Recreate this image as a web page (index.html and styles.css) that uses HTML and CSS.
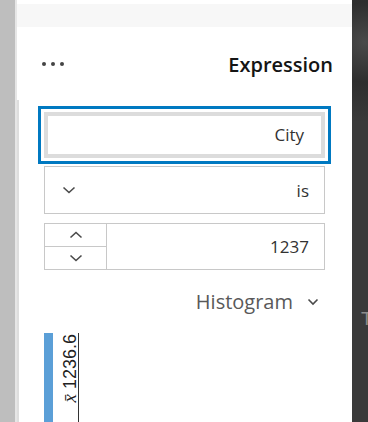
FILE: index.html
```html
<!DOCTYPE html>
<html>
<head>
<meta charset="utf-8">
<link rel="stylesheet" href="styles.css">
</head>
<body>
<div class="page">
  <div class="strip"></div>
  <div class="edge"></div>
  <div class="panel">
    <div class="topband"></div>
    <div class="header">
      <div class="dots"><span></span><span></span><span></span></div>
      <div class="title">Expression</div>
    </div>
    <div class="content">
      <div class="focus"><div class="field">City</div></div>
      <div class="select">
        <svg class="chev" width="14" height="8" viewBox="0 0 14 8"><polyline points="1.5,1.5 7,6.5 12.5,1.5" /></svg>
        <span class="val">is</span>
      </div>
      <div class="number">
        <div class="spin">
          <div class="half"><svg class="chev" width="14" height="8" viewBox="0 0 14 8"><polyline points="1.5,6.5 7,1.5 12.5,6.5" /></svg></div>
          <div class="half lower"><svg class="chev" width="14" height="8" viewBox="0 0 14 8"><polyline points="1.5,1.5 7,6.5 12.5,1.5" /></svg></div>
        </div>
        <div class="num">1237</div>
      </div>
      <div class="toggle">
        <span>Histogram</span>
        <svg class="chev" width="12" height="8" viewBox="0 0 12 8"><polyline points="1.5,1.5 6,6 10.5,1.5" /></svg>
      </div>
      <div class="chart">
        <div class="bar"></div>
        <div class="label"><span class="xbar">x̄</span> 1236.6</div>
        <div class="line"></div>
      </div>
    </div>
  </div>
  <div class="dark"><span class="maplabel">T</span></div>
</div>
</body>
</html>
```

FILE: styles.css
```css
html, body {
  margin: 0;
  padding: 0;
}
body {
  width: 368px;
  height: 422px;
  overflow: hidden;
  font-family: "Open Sans", "Liberation Sans", sans-serif;
  color: #323232;
}
.page {
  display: flex;
  width: 368px;
  height: 422px;
}
.strip {
  width: 15px;
  background: #bebebe;
}
.edge {
  width: 2px;
  background: #e6e6e6;
}
.panel {
  width: 335px;
  background: #ffffff;
  display: flex;
  flex-direction: column;
}
.topband {
  margin-top: 4px;
  height: 23px;
  background: #f7f7f7;
}
.header {
  height: 73px;
  display: flex;
  align-items: center;
  justify-content: space-between;
  padding: 0 19px 0 25px;
}
.dots {
  display: flex;
  gap: 5px;
}
.dots span {
  width: 4px;
  height: 4px;
  border-radius: 50%;
  background: #444444;
}
.title {
  font-size: 20px;
  line-height: 27px;
  font-weight: 600;
  color: #151515;
  margin-top: 2px;
}
.content {
  flex: 1;
  border-left: 2px solid #dedede;
  padding: 6px 21px 0 19px;
  display: flex;
  flex-direction: column;
}
.focus {
  border: 3px solid #0079c1;
  padding: 3px;
}
.field {
  border: 4px solid #dcdcdc;
  height: 38px;
  line-height: 38px;
  font-size: 17px;
  text-align: right;
  padding-right: 17px;
}
.chev {
  display: block;
  fill: none;
  stroke: #4a4a4a;
  stroke-width: 1.6;
}
.select {
  margin: 2px 6px 0;
  height: 46px;
  border: 1px solid #c8c8c8;
  display: flex;
  align-items: center;
  justify-content: space-between;
  padding: 0 15px 0 17px;
  font-size: 17px;
}
.number {
  margin: 9px 6px 0;
  height: 45px;
  border: 1px solid #c8c8c8;
  display: flex;
}
.spin {
  width: 61px;
  border-right: 1px solid #c8c8c8;
  display: flex;
  flex-direction: column;
}
.half {
  flex: 1;
  display: flex;
  align-items: center;
  justify-content: center;
}
.half.lower {
  border-top: 1px solid #c8c8c8;
}
.num {
  flex: 1;
  text-align: right;
  font-size: 17px;
  line-height: 45px;
  padding-right: 15px;
}
.toggle {
  margin: 18px 6px 0;
  display: flex;
  justify-content: flex-end;
  align-items: center;
  gap: 14px;
  padding-right: 6px;
  font-size: 20px;
  line-height: 27px;
  color: #595959;
}
.chart {
  margin: 18px 6px 0;
  flex: 1;
  display: flex;
}
.bar {
  width: 9px;
  background: #5b9fd7;
}
.label {
  margin-left: 10px;
  margin-top: 1px;
  align-self: flex-start;
  writing-mode: vertical-rl;
  transform: rotate(180deg);
  font-family: "Liberation Sans", Arial, sans-serif;
  font-size: 18px;
  line-height: 14px;
  color: #222222;
  white-space: nowrap;
}
.xbar {
  font-family: "Liberation Serif", serif;
  font-style: italic;
  font-size: 19px;
}
.line {
  margin-left: 1px;
  width: 1px;
  background: #333333;
}
.dark {
  flex: 1;
  position: relative;
  overflow: hidden;
  background: radial-gradient(circle at 80% 10%, #4a4a4a 0, #2e2e2e 40px, #3a3a3a 80px);
}
.maplabel {
  position: absolute;
  left: 9px;
  top: 308px;
  font-family: "Liberation Sans", sans-serif;
  font-size: 19px;
  color: #8c8c8c;
}
```
